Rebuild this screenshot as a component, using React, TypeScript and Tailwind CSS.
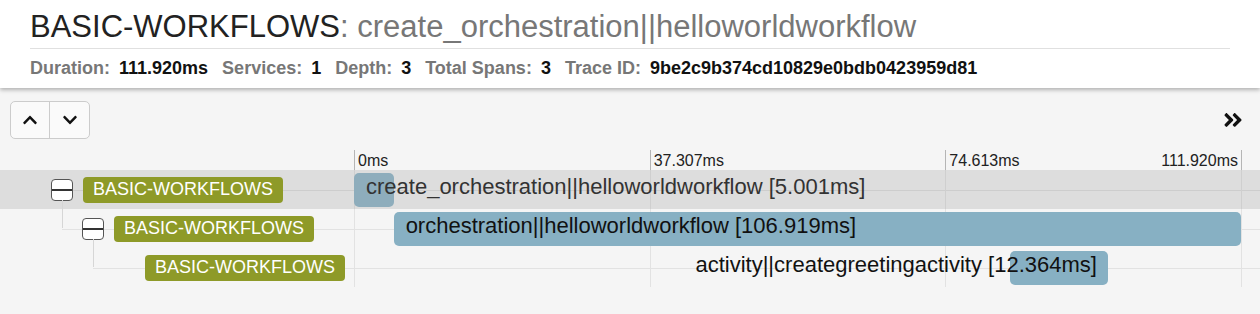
import React from "react";
import { FaChevronUp, FaChevronDown, FaAngleDoubleRight } from "react-icons/fa";

const TOTAL = 111.92;
const AXIS = 887;

type Span = {
  depth: number;
  service: string;
  name: string;
  start: number;
  duration: number;
  collapsible: boolean;
  selected?: boolean;
  labelRight?: boolean;
};

const spans: Span[] = [
  { depth: 0, service: "BASIC-WORKFLOWS", name: "create_orchestration||helloworldworkflow", start: 0, duration: 5.001, collapsible: true, selected: true },
  { depth: 1, service: "BASIC-WORKFLOWS", name: "orchestration||helloworldworkflow", start: 5.001, duration: 106.919, collapsible: true },
  { depth: 2, service: "BASIC-WORKFLOWS", name: "activity||creategreetingactivity", start: 82.77, duration: 12.364, collapsible: false, labelRight: true },
];

const ticks = ["0ms", "37.307ms", "74.613ms", "111.920ms"];

const toPx = (ms: number) => (ms / TOTAL) * AXIS;

const Toggle = () => (
  <div className="w-[22px] h-[22px] shrink-0 rounded-[4px] border-[1.5px] border-[#555] bg-white flex items-center">
    <div className="w-full h-[2px] bg-[#333]" />
  </div>
);

const GridLines = ({ dark }: { dark?: boolean }) => (
  <>
    {[0, 1, 2, 3].map((i) => (
      <div
        key={i}
        className={`absolute top-0 bottom-0 w-px ${dark ? "bg-[#cfcfcf]" : "bg-[#e2e2e2]"}`}
        style={{ left: (AXIS / 3) * i }}
      />
    ))}
  </>
);

const Row = ({ span }: { span: Span }) => {
  const indent = 51 + span.depth * 31;
  const left = toPx(span.start);
  const width = toPx(span.duration);
  return (
    <div className={`relative flex h-[39px] ${span.selected ? "bg-[#dddddd]" : ""}`}>
      {/* row centre line */}
      <div
        className={`absolute right-0 top-1/2 h-px ${span.selected ? "bg-[#cdcdcd]" : "bg-[#e2e2e2]"}`}
        style={{ left: span.depth === 0 ? indent : indent - 20 }}
      />
      {span.depth > 0 && (
        <div className="absolute w-px bg-[#d6d6d6] top-[-9px] h-[28px]" style={{ left: indent - 20 }} />
      )}
      <div className="relative w-[354px] shrink-0 flex items-center" style={{ paddingLeft: indent }}>
        {span.collapsible ? <Toggle /> : <div className="w-[22px] shrink-0" />}
        <span className="ml-[10px] px-[10px] h-[26px] flex items-center rounded-[4px] bg-[#8e9a28] text-white text-[18px]">
          {span.service}
        </span>
      </div>
      <div className="relative flex-1">
        <GridLines dark={span.selected} />
        <div
          className={`absolute top-[3px] bottom-[2px] rounded-[5px] ${span.selected ? "bg-[#8eadbc]" : "bg-[#87b0c3]"}`}
          style={{ left, width }}
        />
        <div
          className={`absolute top-[-1px] h-[34px] flex items-center whitespace-nowrap text-[22px] ${span.selected ? "text-[#333]" : "text-[#111]"}`}
          style={span.labelRight ? { right: 1260 - 354 - (left + width) + 11 } : { left: left + 12 }}
        >
          {span.name} [{span.duration.toFixed(3)}ms]
        </div>
      </div>
    </div>
  );
};

export default function App() {
  return (
    <div className="w-[1260px] h-[314px] overflow-hidden bg-[#f5f5f5] font-['Liberation_Sans',Arial,sans-serif]">
      {/* Header */}
      <div className="relative z-10 h-[88px] bg-white px-[30px] pt-[10px] shadow-[0_2px_4px_rgba(0,0,0,0.28)]">
        <h1 className="text-[31px] leading-[34px] pb-[4px] border-b border-[#e0e0e0] text-[#222]">
          BASIC-WORKFLOWS<span className="text-[#777]">: create_orchestration||helloworldworkflow</span>
        </h1>
        <div className="mt-[9px] flex items-center gap-[14px] text-[18px] leading-[20px] font-bold">
          {[
            ["Duration:", "111.920ms"],
            ["Services:", "1"],
            ["Depth:", "3"],
            ["Total Spans:", "3"],
            ["Trace ID:", "9be2c9b374cd10829e0bdb0423959d81"],
          ].map(([k, v]) => (
            <div key={k} className="flex gap-[9px]">
              <span className="text-[#777]">{k}</span>
              <span className="text-[#111]">{v}</span>
            </div>
          ))}
        </div>
      </div>

      {/* Toolbar */}
      <div className="flex items-center justify-between pl-[10px] pr-[16px] h-[62px] pt-[2px]">
        <div className="flex h-[38px] rounded-[5px] border border-[#cccccc] bg-[#fafafa]">
          <button className="w-[39px] flex items-center justify-center border-r border-[#cccccc] text-[#111]">
            <FaChevronUp size={16} />
          </button>
          <button className="w-[39px] flex items-center justify-center text-[#111]">
            <FaChevronDown size={16} />
          </button>
        </div>
        <FaAngleDoubleRight size={22} className="text-[#111]" />
      </div>

      {/* Ticks */}
      <div className="flex h-[20px]">
        <div className="w-[354px] shrink-0" />
        <div className="relative flex-1 text-[16px] leading-[20px] text-[#222]">
          {ticks.map((t, i) => (
            <div key={t} className="absolute top-0 h-[20px] w-px bg-[#b5b5b5]" style={{ left: (AXIS / 3) * i }}>
              <span className={`absolute top-[1px] whitespace-nowrap ${i === 3 ? "right-[4px]" : "left-[4px]"}`}>{t}</span>
            </div>
          ))}
        </div>
      </div>

      {/* Spans */}
      {spans.map((s, i) => (
        <Row key={i} span={s} />
      ))}
    </div>
  );
}
